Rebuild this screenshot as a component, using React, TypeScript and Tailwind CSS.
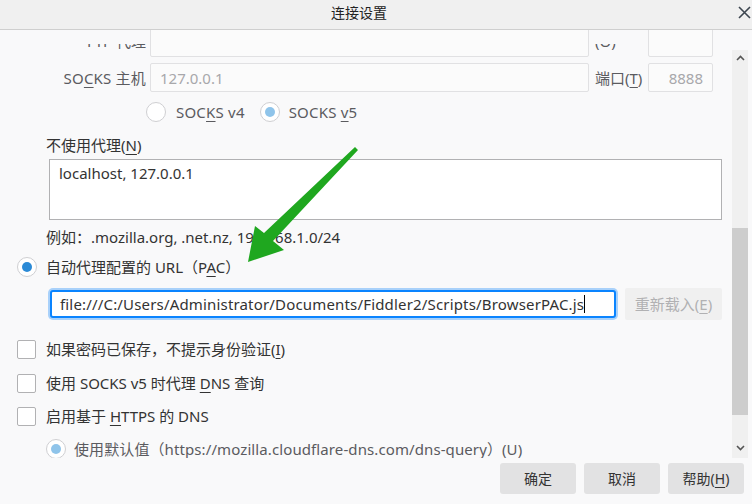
import React from 'react';

const U = ({ children }: { children: React.ReactNode }) => (
  <span className="underline underline-offset-[3px] decoration-1">{children}</span>
);

const Radio = ({ dot }: { dot?: string }) => (
  <span className="w-[20px] h-[20px] shrink-0 rounded-full border border-[#cfcfd2] bg-white flex items-center justify-center">
    {dot && <span className={`w-[10px] h-[10px] rounded-full ${dot}`} />}
  </span>
);

const Checkbox = () => (
  <span className="w-[19px] h-[19px] shrink-0 rounded-[2px] border border-[#b1b1b3] bg-white" />
);

const ScrollArrow = ({ down }: { down?: boolean }) => (
  <svg width="9" height="6" viewBox="0 0 9 6">
    <polyline
      points={down ? '1,1 4.5,4.5 8,1' : '1,5 4.5,1.5 8,5'}
      fill="none"
      stroke="#555"
      strokeWidth="1.6"
    />
  </svg>
);

export default function App() {
  return (
    <div className="relative w-[752px] h-[504px] overflow-hidden bg-[#f9f9fa] flex flex-col font-['Noto_Sans','Noto_Sans_CJK_SC',sans-serif] text-[15px] leading-[20px] text-[#333]">
      {/* title bar */}
      <div className="h-[30px] shrink-0 bg-[#f0f0f0] border-b border-[#cfcfcf] flex items-center pb-[4px]">
        <div className="flex-1 text-center pr-[20px] text-[14px] text-[#222]">连接设置</div>
        <svg width="13" height="13" viewBox="0 0 13 13" className="mr-[1px]">
          <path d="M1 1 L12 12 M12 1 L1 12" stroke="#3d4650" strokeWidth="1.6" />
        </svg>
      </div>

      <div className="flex h-[428px] shrink-0">
        {/* scrolled content */}
        <div className="w-[732px] overflow-hidden flex flex-col">
          <div className="mt-[-2px] h-[29px] shrink-0 flex">
            <div className="w-[146px] flex justify-end">
              <div className="h-[7px] self-end mb-[6px] overflow-hidden flex items-end text-[#5b5b5f]">
                <span className="leading-[20px]">FTP 代理</span>
              </div>
            </div>
            <div className="ml-[4px] w-[439px] h-full border border-[#e1e1e3] bg-[#fbfbfb] rounded-[2px]" />
            <div className="ml-[6px] w-[48px] flex">
              <div className="h-[7px] self-end mb-[6px] overflow-hidden flex items-end text-[#5b5b5f]">
                <span className="leading-[20px]">端口(O)</span>
              </div>
            </div>
            <div className="ml-[5px] w-[65px] h-full border border-[#e1e1e3] bg-[#fbfbfb] rounded-[2px]" />
          </div>

          <div className="mt-[6px] h-[29px] shrink-0 flex items-center">
            <div className="w-[146px] text-right text-[#5b5b5f] tracking-[0.2px]">
              SO<U>C</U>KS 主机
            </div>
            <div className="ml-[4px] w-[439px] h-full border border-[#e1e1e3] bg-[#fbfbfb] rounded-[2px] flex items-center pl-[9px] text-[#a8a8ab]">
              127.0.0.1
            </div>
            <div className="ml-[6px] w-[48px] text-[#5b5b5f]">
              端口(<U>T</U>)
            </div>
            <div className="ml-[5px] w-[65px] h-full border border-[#e1e1e3] bg-[#fbfbfb] rounded-[2px] flex items-center justify-end pr-[9px] text-[#a8a8ab]">
              8888
            </div>
          </div>

          <div className="mt-[10px] h-[20px] shrink-0 flex items-center pl-[146px] text-[#5b5b5f]">
            <Radio />
            <span className="ml-[10px] tracking-[0.2px]">
              SOC<U>K</U>S v4
            </span>
            <span className="ml-[15px]">
              <Radio dot="bg-[#8fc4ea]" />
            </span>
            <span className="ml-[9px] tracking-[0.2px]">
              SOCKS <U>v</U>5
            </span>
          </div>

          <div className="mt-[13px] h-[20px] shrink-0 pl-[46px]">
            不使用代理(<U>N</U>)
          </div>

          <div className="mt-[4px] ml-[49px] w-[673px] h-[61px] shrink-0 border border-[#b1b1b3] bg-white pl-[9px] pt-[3px]">
            localhost, 127.0.0.1
          </div>

          <div className="mt-[7px] h-[20px] shrink-0 pl-[46px]">例如：.mozilla.org, .net.nz, 192.168.1.0/24</div>

          <div className="mt-[10px] h-[20px] shrink-0 pl-[17px] flex items-center">
            <Radio dot="bg-[#2b8ad6]" />
            <span className="ml-[9px]">
              自动代理配置的 URL（P<U>A</U>C）
            </span>
          </div>

          <div className="mt-[11px] h-[32px] shrink-0 flex items-center">
            <div className="ml-[50px] w-[566px] h-[28px] border-2 border-[#0a84ff] rounded-[3px] shadow-[0_0_0_2px_#a9d1fa] bg-white flex items-center pl-[8px]">
              <span className="tracking-[0.17px]">file:///C:/Users/Administrator/Documents/Fiddler2/Scripts/BrowserPAC.js</span>
              <span className="w-[1px] h-[18px] bg-black" />
            </div>
            <div className="ml-[9px] w-[97px] h-[32px] rounded-[2px] bg-[#f0f0f0] flex items-center justify-center text-[#b1b1b3]">
              重新载入(<U>E</U>)
            </div>
          </div>

          <div className="mt-[19px] h-[20px] shrink-0 pl-[17px] flex items-center">
            <Checkbox />
            <span className="ml-[10px]">
              如果密码已保存，不提示身份验证(<U>I</U>)
            </span>
          </div>

          <div className="mt-[14px] h-[20px] shrink-0 pl-[17px] flex items-center">
            <Checkbox />
            <span className="ml-[10px]">
              使用 SOCKS v5 时代理 <U>D</U>NS 查询
            </span>
          </div>

          <div className="mt-[13px] h-[20px] shrink-0 pl-[17px] flex items-center">
            <Checkbox />
            <span className="ml-[10px]">
              启用基于 <U>H</U>TTPS 的 DNS
            </span>
          </div>

          <div className="mt-[13px] h-[20px] shrink-0 pl-[46px] flex items-center text-[#5b5b5f]">
            <Radio dot="bg-[#8fc4ea]" />
            <span className="ml-[8px] tracking-[0.1px]">
              使用默认值（https://mozilla.cloudflare-dns.com/dns-query）(<U>U</U>)
            </span>
          </div>
        </div>

        {/* scrollbar */}
        <div className="w-[16px] pt-[20px] flex flex-col">
          <div className="flex-1 bg-[#f0f0f0] flex flex-col">
            <div className="h-[16px] flex items-center justify-center">
              <ScrollArrow />
            </div>
            <div className="h-[162px]" />
            <div className="h-[187px] bg-[#cdcdcd]" />
            <div className="flex-1" />
            <div className="h-[20px] flex items-center justify-center">
              <ScrollArrow down />
            </div>
          </div>
        </div>
      </div>

      {/* dialog buttons */}
      <div className="flex-1 flex justify-end items-start pt-[5px] pr-[8px] gap-[8px] text-[14px]">
        <div className="w-[76px] h-[31px] rounded-[3px] bg-[#e2e2e3] flex items-center justify-center">确定</div>
        <div className="w-[76px] h-[31px] rounded-[3px] bg-[#e2e2e3] flex items-center justify-center">取消</div>
        <div className="w-[76px] h-[31px] rounded-[3px] bg-[#e2e2e3] flex items-center justify-center">
          帮助(<U>H</U>)
        </div>
      </div>

      {/* annotation arrow */}
      <svg className="absolute left-0 top-0 pointer-events-none" width="752" height="504" viewBox="0 0 752 504">
        <polygon
          points="355,147 358,150 273,241 284,250 248,262 255,226 264,233"
          fill="#1fa71f"
        />
      </svg>
    </div>
  );
}
